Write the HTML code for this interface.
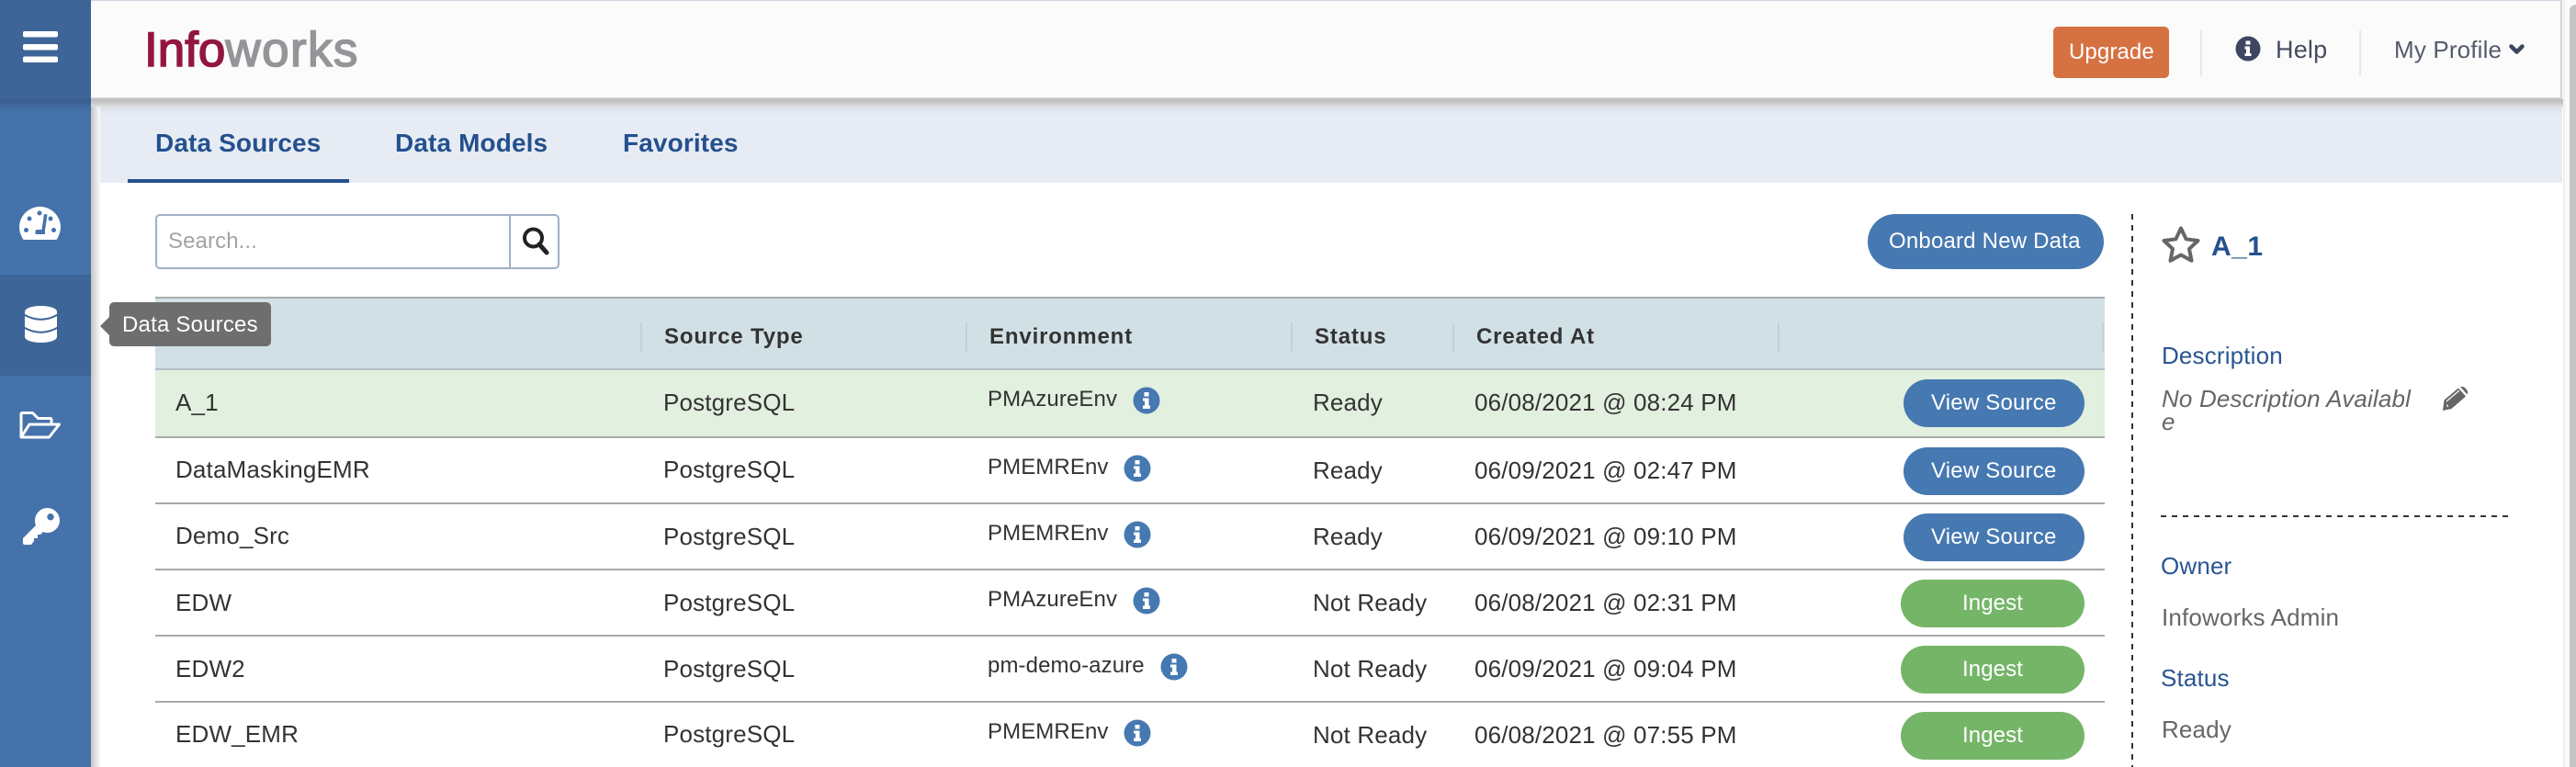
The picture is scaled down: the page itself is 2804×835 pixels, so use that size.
<!DOCTYPE html>
<html lang="en">
<head>
<meta charset="utf-8">
<title>Infoworks - Data Sources</title>
<style>
html,body{margin:0;padding:0;width:2804px;height:835px;overflow:hidden;background:#fff}
body{position:relative;font-family:"Liberation Sans",Arial,sans-serif;color:#333}
.b{position:absolute;box-sizing:border-box}
.t{position:absolute;white-space:nowrap}
.f24{font-size:24px;line-height:27px;margin-top:-22px;letter-spacing:.1px}
.f26{font-size:26px;line-height:30px;margin-top:-24px;letter-spacing:.16px}
.f27{font-size:27px;line-height:30px;margin-top:-24px;letter-spacing:.2px}
.f28{font-size:28px;line-height:31px;margin-top:-25px;font-weight:700;color:#24508e;letter-spacing:.12px}
.f30{font-size:30px;line-height:33px;margin-top:-27px;font-weight:700;color:#24508e;letter-spacing:.5px}
.th{font-size:24px;line-height:27px;margin-top:-22px;font-weight:700;letter-spacing:.85px;color:#333}
.bt{letter-spacing:.2px}
.sep{position:absolute;top:351px;width:2px;height:32px;background:#c3d1d6}
.line{position:absolute;left:169px;width:2122px;height:3px;background:#a9a9a9}
.btn{position:absolute;border-radius:26px;height:52px}
.blue{background:#4678b1;left:2072px;width:197px}
.green{background:#75b568;left:2069px;width:200px}
.w{color:#fff}
.lab{color:#2a5592}
.g{color:#666}
svg{position:absolute;left:0;top:0;overflow:visible}
</style>
</head>
<body>
<!-- scrollbar track -->
<div class="b" style="left:2790px;top:0;width:14px;height:835px;background:#fafafa;border-left:2px solid #eee"></div>
<div class="b" style="left:2797px;top:5px;width:7px;height:830px;background:#c4c4c4;border-top-left-radius:7px"></div>

<!-- tab bar -->
<div class="b" style="left:109px;top:108px;width:2680px;height:91px;background:#e7ecf4"></div>
<div class="b" style="left:99px;top:108px;width:2691px;height:8px;background:linear-gradient(#b8b8b8,#dcdcdc)"></div>
<div class="b" style="left:109px;top:116px;width:2680px;height:10px;background:linear-gradient(rgba(0,0,0,.05),rgba(0,0,0,0))"></div>
<div class="b" style="left:139px;top:195px;width:241px;height:4px;background:#24508e"></div>
<span class="t f28" style="left:169px;top:165px">Data Sources</span>
<span class="t f28" style="left:430px;top:165px">Data Models</span>
<span class="t f28" style="left:678px;top:165px">Favorites</span>

<!-- header -->
<div class="b" style="left:99px;top:0;width:2690px;height:108px;background:#fbfbfb;border-top:1px solid #cdd3e0;border-right:2px solid #cfd3df;border-bottom:2px solid #cfd1d6"></div>
<span class="t" style="left:157px;top:73px;font-size:53px;line-height:59px;margin-top:-48px;color:#92163f;-webkit-text-stroke:1.6px #92163f">Info<span style="color:#939598;-webkit-text-stroke:1.6px #939598;letter-spacing:1.4px">works</span></span>
<div class="b" style="left:2235px;top:29px;width:126px;height:56px;background:#d67242;border-radius:5px"></div>
<span class="t f24 w" style="left:2252px;top:65px">Upgrade</span>
<div class="b" style="left:2395px;top:33px;width:2px;height:50px;background:#e6e8ee"></div>
<div class="b" style="left:2568px;top:33px;width:2px;height:50px;background:#e6e8ee"></div>
<span class="t f27" style="left:2477px;top:63px;color:#464c60">Help</span>
<span class="t f26" style="left:2606px;top:63px;color:#555b6b">My Profile</span>

<!-- sidebar -->
<div class="b" style="left:0;top:0;width:99px;height:835px;background:#4572ab"></div>
<div class="b" style="left:0;top:0;width:99px;height:108px;background:#3e6598"></div>
<div class="b" style="left:0;top:108px;width:99px;height:14px;background:linear-gradient(#3a5c8e,#4572ab)"></div>
<div class="b" style="left:0;top:299px;width:99px;height:110px;background:#3e6598"></div>
<div class="b" style="left:99px;top:116px;width:11px;height:719px;background:linear-gradient(90deg,#c4c4c4,rgba(255,255,255,0))"></div>

<!-- search -->
<div class="b" style="left:169px;top:233px;width:440px;height:60px;border:2px solid #a0b0c6;border-radius:5px;background:#fff"></div>
<div class="b" style="left:554px;top:234px;width:2px;height:58px;background:#a0b0c6"></div>
<span class="t f24" style="left:183px;top:271px;color:#a3a3a3">Search...</span>

<!-- onboard -->
<div class="b" style="left:2033px;top:233px;width:257px;height:60px;background:#4678b1;border-radius:30px"></div>
<span class="t f24 w bt" style="left:2056px;top:271px">Onboard New Data</span>

<!-- table -->
<div class="b" style="left:169px;top:323px;width:2122px;height:79px;background:#d1e0e5"></div>
<div class="b" style="left:169px;top:403px;width:2122px;height:72px;background:#e2f0df"></div>
<div class="line" style="top:323px;height:2px;background:#a9adb0"></div>
<div class="line" style="top:401px;height:2px;background:#b3bfc6"></div>
<div class="line" style="top:475px;height:2px"></div>
<div class="line" style="top:547px;height:2px"></div>
<div class="line" style="top:619px;height:2px"></div>
<div class="line" style="top:691px;height:2px"></div>
<div class="line" style="top:763px;height:2px"></div>
<div class="sep" style="left:697px"></div>
<div class="sep" style="left:1051px"></div>
<div class="sep" style="left:1405px"></div>
<div class="sep" style="left:1581px"></div>
<div class="sep" style="left:1935px"></div>
<div class="sep" style="left:2288px"></div>
<span class="t th" style="left:723px;top:375px">Source Type</span>
<span class="t th" style="left:1077px;top:375px">Environment</span>
<span class="t th" style="left:1431px;top:375px">Status</span>
<span class="t th" style="left:1607px;top:375px">Created At</span>

<span class="t f26" style="left:191px;top:447px">A_1</span>
<span class="t f26" style="left:722px;top:447px">PostgreSQL</span>
<span class="t f24" style="left:1075px;top:443px">PMAzureEnv</span>
<span class="t f26" style="left:1429px;top:447px">Ready</span>
<span class="t f26" style="left:1605px;top:447px">06/08/2021 @ 08:24 PM</span>
<div class="btn blue" style="top:413px"></div>
<span class="t f24 w bt" style="left:2102px;top:447px">View Source</span>

<span class="t f26" style="left:191px;top:520px">DataMaskingEMR</span>
<span class="t f26" style="left:722px;top:520px">PostgreSQL</span>
<span class="t f24" style="left:1075px;top:517px">PMEMREnv</span>
<span class="t f26" style="left:1429px;top:521px">Ready</span>
<span class="t f26" style="left:1605px;top:521px">06/09/2021 @ 02:47 PM</span>
<div class="btn blue" style="top:487px"></div>
<span class="t f24 w bt" style="left:2102px;top:521px">View Source</span>

<span class="t f26" style="left:191px;top:592px">Demo_Src</span>
<span class="t f26" style="left:722px;top:593px">PostgreSQL</span>
<span class="t f24" style="left:1075px;top:589px">PMEMREnv</span>
<span class="t f26" style="left:1429px;top:593px">Ready</span>
<span class="t f26" style="left:1605px;top:593px">06/09/2021 @ 09:10 PM</span>
<div class="btn blue" style="top:559px"></div>
<span class="t f24 w bt" style="left:2102px;top:593px">View Source</span>

<span class="t f26" style="left:191px;top:665px">EDW</span>
<span class="t f26" style="left:722px;top:665px">PostgreSQL</span>
<span class="t f24" style="left:1075px;top:661px">PMAzureEnv</span>
<span class="t f26" style="left:1429px;top:665px">Not Ready</span>
<span class="t f26" style="left:1605px;top:665px">06/08/2021 @ 02:31 PM</span>
<div class="btn green" style="top:631px"></div>
<span class="t f24 w" style="left:2136px;top:665px">Ingest</span>

<span class="t f26" style="left:191px;top:737px">EDW2</span>
<span class="t f26" style="left:722px;top:737px">PostgreSQL</span>
<span class="t f24" style="left:1075px;top:733px">pm-demo-azure</span>
<span class="t f26" style="left:1429px;top:737px">Not Ready</span>
<span class="t f26" style="left:1605px;top:737px">06/09/2021 @ 09:04 PM</span>
<div class="btn green" style="top:703px"></div>
<span class="t f24 w" style="left:2136px;top:737px">Ingest</span>

<span class="t f26" style="left:191px;top:808px">EDW_EMR</span>
<span class="t f26" style="left:722px;top:808px">PostgreSQL</span>
<span class="t f24" style="left:1075px;top:805px">PMEMREnv</span>
<span class="t f26" style="left:1429px;top:809px">Not Ready</span>
<span class="t f26" style="left:1605px;top:809px">06/08/2021 @ 07:55 PM</span>
<div class="btn green" style="top:775px"></div>
<span class="t f24 w" style="left:2136px;top:809px">Ingest</span>

<!-- tooltip -->
<div class="b" style="left:119px;top:329px;width:176px;height:48px;background:#6e6e6e;border-radius:5px"></div>
<span class="t f24 w bt" style="left:133px;top:362px">Data Sources</span>

<!-- details panel -->
<span class="t f30" style="left:2407px;top:279px">A_1</span>
<span class="t f26 lab" style="left:2353px;top:396px">Description</span>
<span class="t f26 g" style="left:2353px;top:443px;font-style:italic">No Description Availabl</span>
<span class="t f26 g" style="left:2353px;top:468px;font-style:italic">e</span>
<span class="t f26 lab" style="left:2352px;top:625px">Owner</span>
<span class="t f26 g" style="left:2353px;top:681px">Infoworks Admin</span>
<span class="t f26 lab" style="left:2352px;top:747px">Status</span>
<span class="t f26 g" style="left:2353px;top:803px">Ready</span>

<!-- icons and dashed rules -->
<svg width="2804" height="835" viewBox="0 0 2804 835" xmlns="http://www.w3.org/2000/svg">
  <!-- hamburger -->
  <g fill="#fff">
    <rect x="25" y="34" width="38" height="6.5" rx="2"/>
    <rect x="25" y="48" width="38" height="6.5" rx="2"/>
    <rect x="25" y="61.500" width="38" height="6.500" rx="2"/>
  </g>
  <!-- gauge -->
  <path fill="#fff" d="M25 260.500Q21 253 21 247.500A22.500 22.500 0 0 1 66 247.500Q66 253 62 260.500Q61.500 261 60 261H27Q25.500 261 25 260.500Z"/>
  <g fill="#4572ab">
    <circle cx="32" cy="238" r="2.500"/><circle cx="43" cy="232" r="2.500"/><circle cx="55" cy="238" r="2.500"/>
    <circle cx="28.500" cy="250.500" r="2.500"/><circle cx="58.500" cy="250.500" r="2.500"/>
    <path d="M48 233L51.500 233.500L49 250.500V255H38.500V252Q38.500 250 41 250H45.500Z"/>
  </g>
  <!-- database -->
  <path fill="#fff" d="M27 339.500C27 335.500 35 333 44.500 333S62 335.500 62 339.500V366.500C62 370.500 54 373 44.500 373S27 370.500 27 366.500Z"/>
  <path fill="none" stroke="#3e6598" stroke-width="2" d="M26 342.500Q44.500 353 63 342.500M26 356.500Q44.500 367 63 356.500"/>
  <!-- folder -->
  <path fill="none" stroke="#fff" stroke-width="3" stroke-linejoin="round" d="M23 476V451Q23 449.500 24.500 449.500H35.500L41.500 455.500H54.500Q56 455.500 56 457V461.500M23 476H53.500L64.500 462H32L23 476Z"/>
  <!-- key -->
  <path fill="#fff" fill-rule="evenodd" d="M51.500 553A13.500 13.500 0 0 1 51.500 580Q49 580 47 579L44 582H41V586H37V589L34 593H27Q25 593 25 591V586L39 572Q38 570 38 566.500A13.500 13.500 0 0 1 51.500 553ZM55 559A3.700 3.700 0 1 0 55 566.400A3.700 3.700 0 1 0 55 559Z"/>
  <!-- tooltip arrow -->
  <path fill="#6e6e6e" d="M119 345L109 355L119 365Z"/>
  <!-- search magnifier -->
  <circle cx="580.500" cy="259" r="9.500" fill="none" stroke="#222" stroke-width="4"/>
  <path d="M587 266L595 275" stroke="#222" stroke-width="5" stroke-linecap="round"/>
  <!-- header info -->
  <circle cx="2447" cy="53" r="13.500" fill="#3e4660"/>
  <g fill="#fff" transform="translate(2447 53)">
    <rect x="-2.500" y="-8.500" width="5" height="4"/>
    <path d="M-3.500 -2.500H2V5H3.500V8H-3.500V5H-2V0.500H-3.500Z"/>
  </g>
  <!-- chevron -->
  <path d="M2733.500 50.500L2739.500 56.500L2745.500 50.500" fill="none" stroke="#3e4660" stroke-width="4.500" stroke-linecap="round" stroke-linejoin="round"/>
  <!-- row info icons -->
  <g id="ri">
    <g transform="translate(1248 436)"><circle r="14.500" fill="#4678b1"/><g fill="#fff"><rect x="-2.500" y="-9" width="5" height="4.500"/><path d="M-4 -2.500H2.500V5.500H4V9H-4V5.500H-2V0.500H-4Z"/></g></g>
    <g transform="translate(1238 510)"><circle r="14.500" fill="#4678b1"/><g fill="#fff"><rect x="-2.500" y="-9" width="5" height="4.500"/><path d="M-4 -2.500H2.500V5.500H4V9H-4V5.500H-2V0.500H-4Z"/></g></g>
    <g transform="translate(1238 582)"><circle r="14.500" fill="#4678b1"/><g fill="#fff"><rect x="-2.500" y="-9" width="5" height="4.500"/><path d="M-4 -2.500H2.500V5.500H4V9H-4V5.500H-2V0.500H-4Z"/></g></g>
    <g transform="translate(1248 654)"><circle r="14.500" fill="#4678b1"/><g fill="#fff"><rect x="-2.500" y="-9" width="5" height="4.500"/><path d="M-4 -2.500H2.500V5.500H4V9H-4V5.500H-2V0.500H-4Z"/></g></g>
    <g transform="translate(1278 726)"><circle r="14.500" fill="#4678b1"/><g fill="#fff"><rect x="-2.500" y="-9" width="5" height="4.500"/><path d="M-4 -2.500H2.500V5.500H4V9H-4V5.500H-2V0.500H-4Z"/></g></g>
    <g transform="translate(1238 798)"><circle r="14.500" fill="#4678b1"/><g fill="#fff"><rect x="-2.500" y="-9" width="5" height="4.500"/><path d="M-4 -2.500H2.500V5.500H4V9H-4V5.500H-2V0.500H-4Z"/></g></g>
  </g>
  <!-- dashed rules -->
  <path d="M2321 233V835" stroke="#333" stroke-width="2" stroke-dasharray="6 6" fill="none"/>
  <path d="M2352 562H2730" stroke="#333" stroke-width="2" stroke-dasharray="6 6" fill="none"/>
  <!-- star -->
  <path fill="none" stroke="#666" stroke-width="4" stroke-linejoin="round" d="M2374 248.500L2379.600 260.300L2392.500 262L2383 270.900L2385.500 283.800L2374 277.500L2362.500 283.800L2365 270.900L2355.500 262L2368.400 260.300Z"/>
  <!-- pencil -->
  <path fill="#666" d="M2659 447L2660.500 435.500L2676 422.500L2684 431.500L2668.500 445ZM2678 421L2680.500 421Q2682 421 2684 423L2685.500 425Q2686.500 427 2686 428L2685.500 429.500L2678 421Z"/>
  <path fill="none" stroke="#fff" stroke-width="1.200" d="M2663 437L2677 425M2663.500 440.500L2664.500 443"/>
</svg>
</body>
</html>
